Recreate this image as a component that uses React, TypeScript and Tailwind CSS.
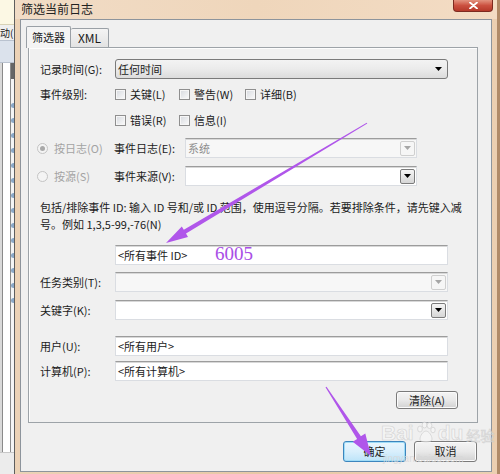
import React from 'react';

const ui = "font-['Noto_Sans_CJK_SC',sans-serif] text-[11px] text-[#1b1b1b]";

function Arrow({ disabled }: { disabled?: boolean }) {
  return (
    <svg width="7" height="4" viewBox="0 0 7 4" className="block">
      <path d="M0 0h7L3.5 4z" fill={disabled ? '#a6a6a6' : '#000'} />
    </svg>
  );
}

function DropButton({ disabled }: { disabled?: boolean }) {
  return (
    <div
      className={`flex h-[15px] w-[15px] items-center justify-center rounded-[2px] border ${
        disabled
          ? 'border-[#cfcfcf] bg-[#f6f6f6]'
          : 'border-[#7b7b7b] bg-gradient-to-b from-[#f5f5f5] to-[#d6d6d6]'
      }`}
    >
      <Arrow disabled={disabled} />
    </div>
  );
}

type BoxProps = {
  className?: string;
  text?: string;
  disabled?: boolean;
  drop?: 'on' | 'off';
};

function TextBox({ className = '', text, disabled, drop }: BoxProps) {
  return (
    <div
      className={`flex h-[20px] items-center border border-[#dadde2] border-t-[#9c9c9c] shadow-[inset_0_1px_0_#d8d8d8] ${
        disabled ? 'bg-[#f7f7f7]' : 'bg-white'
      } ${className}`}
    >
      <span className={`flex-1 truncate pl-[2px] leading-[18px] ${disabled ? 'text-[#8d8d8d]' : ''}`}>{text}</span>
      {drop && (
        <div className="pr-[1px]">
          <DropButton disabled={drop === 'off'} />
        </div>
      )}
    </div>
  );
}

function Check({ label, className = '' }: { label: string; className?: string }) {
  return (
    <div className={`flex items-center gap-[4px] ${className}`}>
      <span className="h-[11px] w-[11px] shrink-0 border border-[#8f8f8f] bg-gradient-to-br from-[#d6d9de] to-[#fbfbfb] shadow-[inset_0_0_0_1px_#f6f6f6]" />
      <span className="leading-[16px]">{label}</span>
    </div>
  );
}

function Radio({ label, checked }: { label: string; checked?: boolean }) {
  return (
    <div className="flex w-[77px] shrink-0 items-center gap-[6px] text-[#a3a3a3]">
      <span className="flex h-[11px] w-[11px] items-center justify-center rounded-full border border-[#c4c4c4] bg-[#f4f4f4]">
        {checked && <span className="h-[5px] w-[5px] rounded-full bg-[#a9a9a9]" />}
      </span>
      <span>{label}</span>
    </div>
  );
}

function Button({ children, className = '', primary }: { children: React.ReactNode; className?: string; primary?: boolean }) {
  return (
    <div
      className={`flex items-center justify-center rounded-[3px] border ${
        primary
          ? 'border-[#3c85bd] bg-gradient-to-b from-[#eaf6fd] via-[#d9effc] to-[#bde4f9] shadow-[inset_0_0_0_1px_#9fdcf7]'
          : 'border-[#7a7a7a] bg-gradient-to-b from-[#f4f4f4] via-[#e9e9e9] to-[#d2d2d2] shadow-[inset_0_0_0_1px_#fbfbfb]'
      } ${className}`}
    >
      {children}
    </div>
  );
}

function FieldRow({ label, className = '', children }: { label: string; className?: string; children: React.ReactNode }) {
  return (
    <div className={`flex h-[20px] items-center pl-[11px] ${className}`}>
      <span className="w-[75px] shrink-0">{label}</span>
      {children}
    </div>
  );
}

// parent window peeking out on the left
function BackWindow() {
  return (
    <div className="flex w-[15px] shrink-0 flex-col overflow-hidden border-r border-[#5e5e5e] bg-[#efefef]">
      <div className="h-[25px] border-b border-[#d8d2b6] bg-[#fcf8e4]" />
      <div className="h-[15px] overflow-hidden whitespace-nowrap pt-[1px] text-[10px] leading-[13px]">动(</div>
      <div className="h-[23px] border-y border-[#b9c2cf] bg-[#dbe2ec]" />
      <div className="flex flex-1 bg-[#d9d9d9] pl-[2px]">
        <div className="w-[9px] border-x border-[#8a8a8a] bg-white" />
        <div className="flex w-[3px] flex-col bg-[#f5f5f5]">
          <div className="h-[16px] bg-[#666]" />
          <div className="mt-[24px] flex flex-col gap-[10px]">
            {Array.from({ length: 14 }).map((_, i) => (
              <span key={i} className="h-[5px] w-[3px] rounded-l-full bg-[#8aa8c8]" />
            ))}
          </div>
        </div>
      </div>
      <div className="h-[22px] border-t border-[#c8c8c8] bg-[#ececec]" />
    </div>
  );
}

export default function App() {
  return (
    <div className={`relative flex h-[474px] w-[500px] overflow-hidden bg-[#b08a68] ${ui}`}>
      <BackWindow />

      {/* dialog frame */}
      <div className="flex w-[482px] shrink-0 flex-col bg-gradient-to-r from-[#ecd2b6] via-[#e8c8a6] to-[#eccfb1]">
        <div className="flex h-[19px] items-start bg-gradient-to-r from-[#f1dcc6] via-[#efd6bb] to-[#f3dcc4]">
          <span className="pl-[6px] pt-[1px] text-[12px] leading-[16px] text-[#222]">筛选当前日志</span>
          <div className="ml-auto mr-[4px] flex h-[12px] w-[40px] items-center justify-center rounded-b-[4px] border border-t-0 border-[#7d2a20] bg-gradient-to-b from-[#e2927f] via-[#cb5040] to-[#b5392a]">
            <svg width="9" height="7" viewBox="0 0 9 7">
              <path d="M1 0.5l7 6M8 0.5l-7 6" stroke="#fff" strokeWidth="1.8" strokeLinecap="round" />
            </svg>
          </div>
        </div>

        <div className="mx-[5px] flex h-[453px] flex-col border border-[#8d949c] bg-[#f0f0f0]">
          {/* tabs */}
          <div className="relative z-10 flex h-[27px] items-end pl-[5px]">
            <div className="-mb-[1px] flex h-[22px] w-[45px] items-center justify-center rounded-t-[2px] border border-b-0 border-[#9aa0a6] bg-[#f4f4f4]">
              筛选器
            </div>
            <div className="flex h-[19px] w-[38px] items-center justify-center rounded-t-[2px] border border-b-0 border-l-0 border-[#9aa0a6] bg-gradient-to-b from-[#f4f4f4] to-[#e3e3e3] text-[12px]">
              XML
            </div>
          </div>

          {/* tab page */}
          <div className="ml-[7px] flex h-[376px] w-[450px] flex-col border border-[#9da3a8] shadow-[inset_1px_1px_0_#fdfdfd]">
            <FieldRow label="记录时间(G):" className="mt-[11px]">
              <div className="flex h-[20px] w-[333px] items-center justify-between rounded-[3px] border border-[#7a7a7a] bg-gradient-to-b from-[#f3f3f3] via-[#ebebeb] to-[#dcdcdc] pl-[2px] pr-[5px]">
                <span>任何时间</span>
                <Arrow />
              </div>
            </FieldRow>

            <div className="mt-[7px] flex h-[16px] items-center pl-[11px]">
              <span className="w-[75px] shrink-0">事件级别:</span>
              <Check label="关键(L)" className="w-[64px]" />
              <Check label="警告(W)" className="w-[66px]" />
              <Check label="详细(B)" />
            </div>
            <div className="mt-[10px] flex h-[16px] items-center pl-[86px]">
              <Check label="错误(R)" className="w-[64px]" />
              <Check label="信息(I)" />
            </div>

            <div className="mt-[10px] flex h-[20px] items-center pl-[8px]">
              <Radio label="按日志(O)" checked />
              <span className="w-[71px] shrink-0">事件日志(E):</span>
              <TextBox className="w-[232px]" text="系统" disabled drop="off" />
            </div>
            <div className="mt-[8px] flex h-[20px] items-center pl-[8px]">
              <Radio label="按源(S)" />
              <span className="w-[71px] shrink-0">事件来源(V):</span>
              <TextBox className="w-[232px]" drop="on" />
            </div>

            <p className="mt-[13px] whitespace-nowrap pl-[11px] leading-[17px]">
              包括/排除事件 ID: 输入 ID 号和/或 ID 范围，使用逗号分隔。若要排除条件，请先键入减
              <br />
              号。例如 1,3,5-99,-76(N)
            </p>

            <div className="mt-[12px] flex h-[20px] pl-[86px]">
              <TextBox className="w-[333px]" text="<所有事件 ID>" />
            </div>
            <FieldRow label="任务类别(T):" className="mt-[7px]">
              <TextBox className="w-[333px]" disabled drop="off" />
            </FieldRow>
            <FieldRow label="关键字(K):" className="mt-[8px]">
              <TextBox className="w-[333px]" drop="on" />
            </FieldRow>
            <FieldRow label="用户(U):" className="mt-[16px]">
              <TextBox className="w-[333px]" text="<所有用户>" />
            </FieldRow>
            <FieldRow label="计算机(P):" className="mt-[5px]">
              <TextBox className="w-[333px]" text="<所有计算机>" />
            </FieldRow>

            <div className="mt-[10px] flex justify-end pr-[19px]">
              <Button className="h-[18px] w-[62px]">清除(A)</Button>
            </div>
          </div>

          <div className="mt-[18px] flex justify-end gap-[8px] pr-[14px]">
            <Button primary className="h-[21px] w-[63px]">确定</Button>
            <Button className="h-[21px] w-[63px]">取消</Button>
          </div>
        </div>
      </div>

      {/* typed-in value */}
      <span className="pointer-events-none absolute left-[215px] top-[244px] font-['Liberation_Serif',serif] text-[19px] leading-[20px] text-[#a94ee6]">
        6005
      </span>

      {/* site watermark */}
      <div className="pointer-events-none absolute left-[381px] top-[421px] flex items-end gap-[1px] font-['Liberation_Sans',sans-serif] text-[#f6f6f6] [-webkit-text-stroke:0.6px_#c9c9c9] opacity-75">
        <span className="text-[21px] font-bold leading-[22px]">Bai</span>
        <svg width="22" height="22" viewBox="0 0 22 22" className="mb-[1px]">
          <g fill="#f6f6f6" stroke="#c9c9c9" strokeWidth="0.8">
            <ellipse cx="5" cy="8" rx="2.4" ry="3" />
            <ellipse cx="9.5" cy="4" rx="2.4" ry="3" />
            <ellipse cx="14.5" cy="4.5" rx="2.4" ry="3" />
            <ellipse cx="18" cy="9" rx="2.2" ry="2.8" />
            <path d="M11 10c-3 0-6 5-6 8 0 2 2 3 6 3s6-1 6-3c0-3-3-8-6-8z" />
          </g>
        </svg>
        <span className="text-[21px] font-bold leading-[22px]">du</span>
        <span className="ml-[2px] font-['Noto_Sans_CJK_SC',sans-serif] text-[14px] leading-[18px]">经验</span>
      </div>
      <span className="pointer-events-none absolute left-[383px] top-[453px] font-['Liberation_Sans',sans-serif] text-[10px] leading-[11px] text-[#d8d8d8] opacity-80">
        jingyan.baidu.com
      </span>

      {/* annotation arrows */}
      <svg className="pointer-events-none absolute left-0 top-0" width="500" height="474" viewBox="0 0 500 474">
        <g fill="#b056ea">
          <polygon points="366.7,122.7 367.3,123.5 186,233.6 188,236.9 166,243 181.8,226.5 183.8,229.8" />
          <polygon points="325.5,387.3 326.5,386.7 360.9,436.3 365.3,433.5 371,456 352.7,441.7 357.1,438.9" />
        </g>
      </svg>
    </div>
  );
}
